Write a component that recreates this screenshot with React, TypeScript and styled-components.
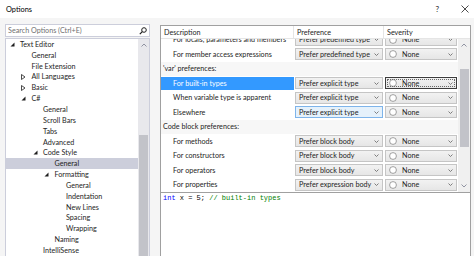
import styled, { createGlobalStyle } from "styled-components";

const GlobalStyle = createGlobalStyle`
  html, body { margin: 0; padding: 0; }
  body {
    width: 474px;
    height: 256px;
    overflow: hidden;
    background: #f5f5f5;
    font-family: Lato, "Liberation Sans", sans-serif;
    font-size: 7.2px;
    color: #1e1e1e;
  }
`;

// tree on the left
const treeItems = [
  { label: "Text Editor", level: 0, arrow: "open" },
  { label: "General", level: 1 },
  { label: "File Extension", level: 1 },
  { label: "All Languages", level: 1, arrow: "closed" },
  { label: "Basic", level: 1, arrow: "closed" },
  { label: "C#", level: 1, arrow: "open" },
  { label: "General", level: 2 },
  { label: "Scroll Bars", level: 2 },
  { label: "Tabs", level: 2 },
  { label: "Advanced", level: 2 },
  { label: "Code Style", level: 2, arrow: "open" },
  { label: "General", level: 3, selected: true },
  { label: "Formatting", level: 3, arrow: "open" },
  { label: "General", level: 4 },
  { label: "Indentation", level: 4 },
  { label: "New Lines", level: 4 },
  { label: "Spacing", level: 4 },
  { label: "Wrapping", level: 4 },
  { label: "Naming", level: 3 },
  { label: "IntelliSense", level: 2 },
];

type GridRow =
  | { kind: "group"; label: string }
  | {
      kind: "item";
      label: string;
      pref: string;
      selected?: boolean;
      hover?: boolean;
      focus?: boolean;
    };

const gridRows: GridRow[] = [
  { kind: "item", label: "For locals, parameters and members", pref: "Prefer predefined type" },
  { kind: "item", label: "For member access expressions", pref: "Prefer predefined type" },
  { kind: "group", label: "'var' preferences:" },
  { kind: "item", label: "For built-in types", pref: "Prefer explicit type", selected: true, focus: true },
  { kind: "item", label: "When variable type is apparent", pref: "Prefer explicit type" },
  { kind: "item", label: "Elsewhere", pref: "Prefer explicit type", hover: true },
  { kind: "group", label: "Code block preferences:" },
  { kind: "item", label: "For methods", pref: "Prefer block body" },
  { kind: "item", label: "For constructors", pref: "Prefer block body" },
  { kind: "item", label: "For operators", pref: "Prefer block body" },
  { kind: "item", label: "For properties", pref: "Prefer expression body" },
];

const Chevron = () => (
  <svg width="5" height="3" viewBox="0 0 5 3">
    <polyline points="0.5,0.5 2.5,2.5 4.5,0.5" fill="none" stroke="#707070" strokeWidth="0.9" />
  </svg>
);

const ScrollArrow = ({ up }: { up?: boolean }) => (
  <svg width="6" height="4" viewBox="0 0 6 4">
    <polyline
      points={up ? "0.5,3.5 3,1 5.5,3.5" : "0.5,0.5 3,3 5.5,0.5"}
      fill="none"
      stroke="#868999"
      strokeWidth="0.9"
    />
  </svg>
);

const TreeArrow = ({ open }: { open: boolean }) =>
  open ? (
    <svg width="5" height="5" viewBox="0 0 5 5">
      <polygon points="4.5,0.5 4.5,4.5 0.5,4.5" fill="#1e1e1e" />
    </svg>
  ) : (
    <svg width="5" height="6" viewBox="0 0 5 6">
      <polygon points="0.5,0.5 4,3 0.5,5.5" fill="none" stroke="#1e1e1e" strokeWidth="0.8" />
    </svg>
  );

const App = () => {
  return (
    <>
      <GlobalStyle />
      <Dialog>
        <TitleBar>
          <Title>Options</Title>
          <TitleButtons>
            <HelpButton>?</HelpButton>
            <svg width="8" height="8" viewBox="0 0 8 8">
              <line x1="0.5" y1="0.5" x2="7.5" y2="7.5" stroke="#1e1e1e" strokeWidth="0.8" />
              <line x1="7.5" y1="0.5" x2="0.5" y2="7.5" stroke="#1e1e1e" strokeWidth="0.8" />
            </svg>
          </TitleButtons>
        </TitleBar>

        <Content>
          <LeftPane>
            <SearchBox>
              <span>Search Options (Ctrl+E)</span>
              <svg width="8" height="8" viewBox="0 0 8 8">
                <circle cx="5" cy="3" r="2.3" fill="none" stroke="#1e1e1e" strokeWidth="1" />
                <line x1="3.3" y1="4.7" x2="0.8" y2="7.2" stroke="#1e1e1e" strokeWidth="1.2" />
              </svg>
            </SearchBox>
            <Tree>
              <TreeList>
                {treeItems.map((item, i) => (
                  <TreeRow key={i} $level={item.level} $selected={!!item.selected}>
                    <ArrowSlot>
                      {item.arrow && <TreeArrow open={item.arrow === "open"} />}
                    </ArrowSlot>
                    {item.label}
                  </TreeRow>
                ))}
              </TreeList>
              <TreeScroll>
                <ArrowBox>
                  <ScrollArrow up />
                </ArrowBox>
                <Thumb $top={84} $height={200} />
              </TreeScroll>
            </Tree>
          </LeftPane>

          <RightPane>
            <Grid>
              <Header>
                <HeaderCell $width={133}>Description</HeaderCell>
                <HeaderCell $width={90}>Preference</HeaderCell>
                <HeaderCell $width={86} $last>
                  Severity
                </HeaderCell>
              </Header>
              <GridBody>
                <RowsViewport>
                  <RowList>
                    {gridRows.map((row, i) =>
                      row.kind === "group" ? (
                        <GroupRow key={i}>{row.label}</GroupRow>
                      ) : (
                        <ItemRow key={i}>
                          <DescCell $selected={!!row.selected}>{row.label}</DescCell>
                          <Combo $hover={!!row.hover}>
                            <ComboText>{row.pref}</ComboText>
                            <Chevron />
                          </Combo>
                          <Combo $focus={!!row.focus}>
                            <ComboText>
                              <svg width="8" height="8" viewBox="0 0 8 8">
                                <circle cx="4" cy="4" r="3.4" fill="#fff" stroke="#7a7a7a" strokeWidth="0.7" />
                              </svg>
                              None
                            </ComboText>
                            <Chevron />
                          </Combo>
                        </ItemRow>
                      )
                    )}
                  </RowList>
                </RowsViewport>
                <GridScroll>
                  <ArrowBox>
                    <ScrollArrow up />
                  </ArrowBox>
                  <Thumb $top={18} $height={78} />
                  <Spacer />
                  <ArrowBox>
                    <ScrollArrow />
                  </ArrowBox>
                </GridScroll>
              </GridBody>
              <Preview>
                <Keyword>int</Keyword> x = 5; <Comment>// built-in types</Comment>
              </Preview>
            </Grid>
          </RightPane>
        </Content>
      </Dialog>
    </>
  );
};

export default App;

const Dialog = styled.div`
  width: 474px;
  height: 256px;
  display: flex;
  flex-direction: column;
  overflow: hidden;
`;

const TitleBar = styled.div`
  height: 18px;
  flex-shrink: 0;
  display: flex;
  align-items: center;
  justify-content: space-between;
  padding: 0 5px 0 6px;
  background: #ffffff;
`;

const Title = styled.div`
  font-size: 7.4px;
  color: #000;
`;

const TitleButtons = styled.div`
  display: flex;
  align-items: center;
  gap: 22px;
`;

const HelpButton = styled.span`
  font-size: 8px;
  color: #1e1e1e;
`;

const Content = styled.div`
  flex: 1;
  min-height: 0;
  display: flex;
  gap: 10px;
  padding: 6px 3px 0 5px;
`;

const LeftPane = styled.div`
  width: 145px;
  flex-shrink: 0;
  display: flex;
  flex-direction: column;
  gap: 1px;
`;

const SearchBox = styled.div`
  height: 13px;
  box-sizing: border-box;
  border: 1px solid #cccedb;
  background: #fff;
  display: flex;
  align-items: center;
  justify-content: space-between;
  padding: 0 2px 0 2px;
  color: #717171;
`;

const Tree = styled.div`
  flex: 1;
  min-height: 0;
  display: flex;
  border: 1px solid #cccedb;
  border-bottom: none;
  background: #fff;
  overflow: hidden;
`;

const TreeList = styled.div`
  flex: 1;
  display: flex;
  flex-direction: column;
`;

const TreeRow = styled.div<{ $level: number; $selected: boolean }>`
  height: 10.85px;
  flex-shrink: 0;
  display: flex;
  align-items: center;
  padding-left: ${(p) => 2 + p.$level * 11.5}px;
  background: ${(p) => (p.$selected ? "#cccedb" : "transparent")};
  white-space: nowrap;
`;

const ArrowSlot = styled.span`
  width: 8px;
  margin-right: 4px;
  display: flex;
  justify-content: center;
  align-items: center;
`;

const TreeScroll = styled.div`
  width: 11px;
  flex-shrink: 0;
  display: flex;
  flex-direction: column;
  align-items: center;
  background: #e8e8ec;
`;

const ArrowBox = styled.div`
  height: 12px;
  flex-shrink: 0;
  display: flex;
  align-items: center;
  justify-content: center;
`;

const Thumb = styled.div<{ $top: number; $height: number }>`
  width: 9px;
  flex-shrink: 0;
  margin-top: ${(p) => p.$top}px;
  height: ${(p) => p.$height}px;
  background: #c2c3c9;
`;

const Spacer = styled.div`
  flex: 1;
`;

const RightPane = styled.div`
  flex: 1;
  min-width: 0;
  display: flex;
  flex-direction: column;
  margin-top: 1px;
`;

const Grid = styled.div`
  flex: 1;
  display: flex;
  flex-direction: column;
  border: 1px solid #a0a0a0;
  border-bottom: none;
  background: #fff;
`;

const Header = styled.div`
  height: 12px;
  flex-shrink: 0;
  display: flex;
  border-bottom: 1px solid #e5e5e5;
`;

const HeaderCell = styled.div<{ $width: number; $last?: boolean }>`
  width: ${(p) => p.$width}px;
  box-sizing: border-box;
  display: flex;
  align-items: center;
  padding-left: 3px;
  border-right: ${(p) => (p.$last ? "none" : "1px solid #e5e5e5")};
  color: #1e1e1e;
`;

const GridBody = styled.div`
  height: 153px;
  flex-shrink: 0;
  display: flex;
`;

const RowsViewport = styled.div`
  width: 297px;
  overflow: hidden;
`;

const RowList = styled.div`
  display: flex;
  flex-direction: column;
  margin-top: -6.5px;
`;

const GroupRow = styled.div`
  height: 14.5px;
  flex-shrink: 0;
  display: flex;
  align-items: center;
  padding-left: 2px;
  background: #f7f7f7;
`;

const ItemRow = styled.div`
  height: 14.5px;
  flex-shrink: 0;
  display: grid;
  grid-template-columns: 133px 90px 74px;
  align-items: center;
`;

const DescCell = styled.div<{ $selected: boolean }>`
  height: 13.5px;
  display: flex;
  align-items: center;
  padding-left: 12px;
  white-space: nowrap;
  overflow: hidden;
  background: ${(p) => (p.$selected ? "#3399ff" : "transparent")};
  color: ${(p) => (p.$selected ? "#ffffff" : "#1e1e1e")};
`;

const Combo = styled.div<{ $hover?: boolean; $focus?: boolean }>`
  height: 12px;
  margin: 0 1px;
  box-sizing: border-box;
  display: flex;
  align-items: center;
  justify-content: space-between;
  padding: 0 3px 0 2px;
  border: 1px solid
    ${(p) => (p.$focus ? "#3c3c3c" : p.$hover ? "#7eb4ea" : "#c5c5c5")};
  background: ${(p) =>
    p.$hover ? "#e5f1fb" : "linear-gradient(#f2f2f2, #e6e6e6)"};
  outline: ${(p) => (p.$focus ? "1px dotted #6a6a6a" : "none")};
  outline-offset: -3px;
  white-space: nowrap;
  overflow: hidden;
  color: #1e1e1e;
`;

const ComboText = styled.span`
  display: flex;
  align-items: center;
  gap: 5px;
  padding-left: 1px;
`;

const GridScroll = styled.div`
  width: 12px;
  flex-shrink: 0;
  display: flex;
  flex-direction: column;
  align-items: center;
  background: #f0f0f0;
`;

const Preview = styled.div`
  flex: 1;
  border-top: 1px solid #a0a0a0;
  padding: 1px 2px;
  font-family: "Liberation Mono", monospace;
  font-size: 7px;
  line-height: 9px;
  color: #000;
  white-space: pre;
`;

const Keyword = styled.span`
  color: #0000ff;
`;

const Comment = styled.span`
  color: #008000;
`;
